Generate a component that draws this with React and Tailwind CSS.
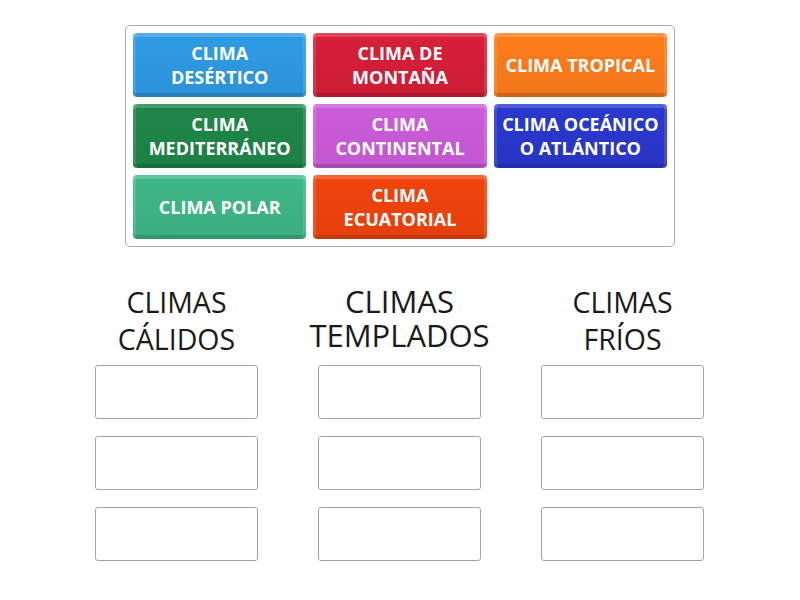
import React from "react";

const tiles = [
  { label: ["CLIMA", "DESÉRTICO"], bg: "bg-[#2f9be6]" },
  { label: ["CLIMA DE", "MONTAÑA"], bg: "bg-[#d81f38]" },
  { label: ["CLIMA TROPICAL"], bg: "bg-[#ff7d1c]" },
  { label: ["CLIMA", "MEDITERRÁNEO"], bg: "bg-[#1f8748]" },
  { label: ["CLIMA", "CONTINENTAL"], bg: "bg-[#cd5cdb]" },
  { label: ["CLIMA OCEÁNICO", "O ATLÁNTICO"], bg: "bg-[#2a38cf]" },
  { label: ["CLIMA POLAR"], bg: "bg-[#3fb888]" },
  { label: ["CLIMA", "ECUATORIAL"], bg: "bg-[#f2440c]" },
];

const groups = [
  { title: ["CLIMAS", "CÁLIDOS"], txt: "text-[28.5px] leading-[37px]" },
  { title: ["CLIMAS", "TEMPLADOS"], txt: "text-[31px] leading-[34px]" },
  { title: ["CLIMAS", "FRÍOS"], txt: "text-[28.5px] leading-[37px]" },
];

function Tile({ tile }) {
  return (
    <div
      className={`${tile.bg} h-[64px] rounded-[4px] flex flex-col items-center justify-center text-white font-bold text-[18px] leading-[24px] text-center shadow-[inset_0_4px_0_rgba(255,255,255,0.18),inset_3px_0_0_rgba(255,255,255,0.12),inset_-3px_0_0_rgba(255,255,255,0.12),inset_0_-4px_0_rgba(0,0,0,0.14)] bg-gradient-to-b from-transparent to-[rgba(0,0,0,0.06)]`}
    >
      {tile.label.map((l) => (
        <span key={l} className="whitespace-nowrap">
          {l}
        </span>
      ))}
    </div>
  );
}

function Group({ group }) {
  return (
    <div className="w-[163px] flex flex-col items-center">
      <div className="h-[81px] flex flex-col items-center">
        <p className={`${group.txt} text-center text-[#1a1a1a] whitespace-nowrap`}>
          {group.title[0]}
          <br />
          {group.title[1]}
        </p>
      </div>
      <div className="w-full flex flex-col gap-[17px]">
        <div className="h-[54px] border border-[#a3a3a3] rounded-[3px] bg-white" />
        <div className="h-[54px] border border-[#a3a3a3] rounded-[3px] bg-white" />
        <div className="h-[54px] border border-[#a3a3a3] rounded-[3px] bg-white" />
      </div>
    </div>
  );
}

export default function App() {
  return (
    <div className="w-[800px] h-[600px] bg-white pt-[25px] font-['Open_Sans',sans-serif]">
      <div className="mx-auto w-[550px] border border-[#a8a8a8] rounded-[5px] p-[7px] grid grid-cols-3 gap-[7px]">
        {tiles.map((t) => (
          <Tile key={t.label.join(" ")} tile={t} />
        ))}
      </div>
      <div className="mt-[37px] pl-[95px] flex gap-[60px]">
        {groups.map((g) => (
          <Group key={g.title.join(" ")} group={g} />
        ))}
      </div>
    </div>
  );
}
